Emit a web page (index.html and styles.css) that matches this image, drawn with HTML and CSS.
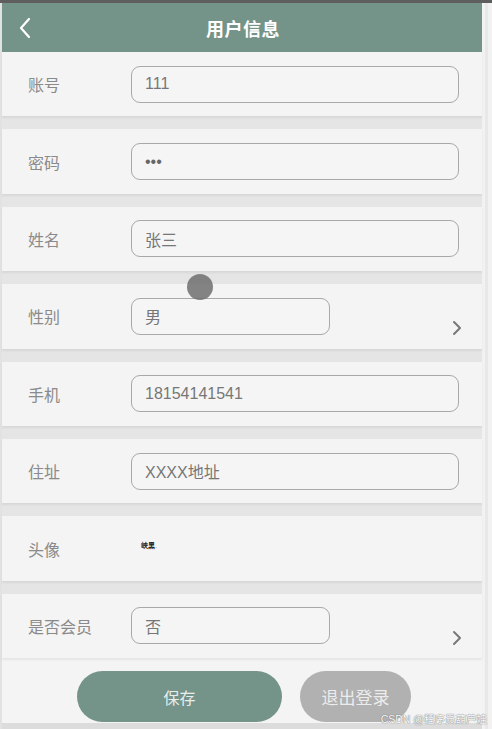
FILE: index.html
```html
<!DOCTYPE html>
<html lang="zh">
<head>
<meta charset="utf-8">
<link rel="stylesheet" href="styles.css">
</head>
<body>
<div class="topstrip"></div>
<div class="frame">
  <div class="app">
    <header class="header">
      <svg class="back" width="14" height="22" viewBox="0 0 14 22"><path d="M11 2 L3 11 L11 20" fill="none" stroke="#fff" stroke-width="2.2" stroke-linecap="round" stroke-linejoin="round"/></svg>
      <h1 class="title">用户信息</h1>
    </header>
    <div class="list">
      <div class="row"><span class="label">账号</span><div class="field">111</div></div>
      <div class="row"><span class="label">密码</span><div class="field dots">•••</div></div>
      <div class="row"><span class="label">姓名</span><div class="field">张三</div></div>
      <div class="row"><span class="label">性别</span><div class="field short">男</div><svg class="arrow" width="10" height="16" viewBox="0 0 10 16"><path d="M2 2 L8 8 L2 14" fill="none" stroke="#777" stroke-width="2" stroke-linecap="round" stroke-linejoin="round"/></svg></div>
      <div class="row"><span class="label">手机</span><div class="field">18154141541</div></div>
      <div class="row"><span class="label">住址</span><div class="field">XXXX地址</div></div>
      <div class="row"><span class="label">头像</span><span class="avatar">峡黑<span class="dot">.</span></span></div>
      <div class="row"><span class="label">是否会员</span><div class="field short">否</div><svg class="arrow" width="10" height="16" viewBox="0 0 10 16"><path d="M2 2 L8 8 L2 14" fill="none" stroke="#777" stroke-width="2" stroke-linecap="round" stroke-linejoin="round"/></svg></div>
    </div>
    <div class="actions">
      <button class="btn save">保存</button>
      <button class="btn logout">退出登录</button>
    </div>
    <div class="bottomstrip"></div>
    <div class="touch"></div>
    <div class="watermark">CSDN @程序员葫芦娃</div>
  </div>
</div>
</body>
</html>
```
FILE: styles.css
```css
* { box-sizing: border-box; }
html, body { margin: 0; padding: 0; }
body {
  background: #f2f2f2;
  font-family: "Liberation Sans", "Noto Sans CJK SC", sans-serif;
  width: 492px;
  height: 729px;
  overflow: hidden;
}
.topstrip { height: 3px; background: #5e5e5e; }
.frame {
  display: flex;
  height: 726px;
  border-left: 2px solid #e2e2e2;
}
.app {
  position: relative;
  width: 483px;
  background: #f4f4f4;
  display: flex;
  flex-direction: column;
  border-right: 3px solid #f2f2f2;
  box-shadow: 3px 0 0 #e8e8e8;
}
.header {
  height: 49px;
  background: #749489;
  display: flex;
  align-items: center;
  justify-content: center;
  position: relative;
}
.back { position: absolute; left: 16px; top: 14px; }
.title {
  margin: 0;
  color: #fff;
  font-size: 18px;
  font-weight: 700;
  letter-spacing: 0.5px;
  margin-left: 2px;
}
.list {
  display: flex;
  flex-direction: column;
  gap: 13px;
  background: #e5e5e5;
}
.row {
  height: 64.4px;
  background: #f4f4f4;
  display: flex;
  align-items: center;
  position: relative;
  box-shadow: 0 2px 2px rgba(0,0,0,0.06);
}
.label {
  width: 129px;
  padding-left: 26px;
  font-size: 16px;
  color: #8a8a8a;
}
.field {
  width: 328px;
  height: 37px;
  border: 1.5px solid #a9a9a9;
  border-radius: 9px;
  padding-left: 13px;
  display: flex;
  align-items: center;
  font-size: 16px;
  color: #777;
  background: #f5f5f5;
}
.field.dots { font-size: 16px; color: #666; padding-left: 13px; }
.field.short { width: 199px; }
.arrow { position: absolute; left: 450px; top: 36px; }
.avatar {
  font-family: "Noto Sans CJK SC", sans-serif;
  font-size: 7px;
  font-weight: 700;
  color: #222;
  margin-left: 10px;
  margin-top: -8px;
}
.avatar .dot { color: #aaa; font-weight: 400; }
.actions {
  flex: 1;
  display: flex;
  align-items: flex-start;
  padding-top: 13px;
  padding-left: 75px;
  gap: 18px;
}
.btn {
  height: 51px;
  border: none;
  border-radius: 26px;
  font-family: "Noto Sans CJK SC", sans-serif;
  font-size: 16px;
  color: #fff;
}
.save { width: 205px; background: #749489; color: #e8eeec; }
.logout { width: 111px; background: #b1b1b1; color: #ececec; font-size: 17px; }
.bottomstrip { height: 6px; background: #dcdcdc; }
.touch {
  position: absolute;
  left: 185px;
  top: 271px;
  width: 26px;
  height: 26px;
  border-radius: 50%;
  background: rgba(110,110,110,0.85);
}
.watermark {
  position: absolute;
  right: -5px;
  top: 708px;
  font-size: 10.5px;
  color: #fafafa;
  text-shadow: 0 0 1px #777, 0 0 1px #777;
}
```
